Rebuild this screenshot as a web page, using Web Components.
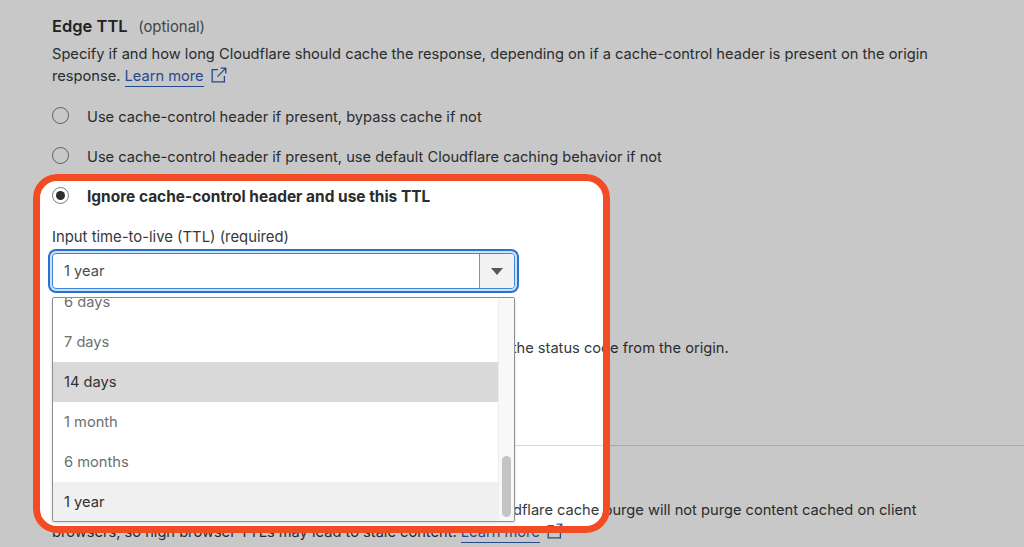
<!DOCTYPE html>
<html lang="en"><head><meta charset="utf-8"><title>Edge TTL</title>
<style>
html,body{margin:0;padding:0;background:#fff}
body{width:1024px;height:547px;overflow:hidden;position:relative;font:14.65px/22px Inter,"Liberation Sans",sans-serif;color:#36393a}
</style></head><body>
<cf-settings>
  <cf-section>
    <span slot="title">Edge TTL</span><span slot="note">(optional)</span>
    Specify if and how long Cloudflare should cache the response, depending on if a cache-control header is present on the origin response. <cf-link>Learn more</cf-link>
  </cf-section>
  <cf-radio>Use cache-control header if present, bypass cache if not</cf-radio>
  <cf-radio>Use cache-control header if present, use default Cloudflare caching behavior if not</cf-radio>
  <cf-radio checked>Ignore cache-control header and use this TTL</cf-radio>
  <cf-select label="Input time-to-live (TTL) (required)" value="1 year">
    <cf-option>6 days</cf-option>
    <cf-option>7 days</cf-option>
    <cf-option active>14 days</cf-option>
    <cf-option>1 month</cf-option>
    <cf-option>6 months</cf-option>
    <cf-option selected>1 year</cf-option>
  </cf-select>
  <cf-note>Cache is based on the status code from the origin.</cf-note>
  <cf-divider></cf-divider>
  <cf-foot>Specify how long client browsers should cache the response. Cloudflare cache purge will not purge content cached on client browsers, so high browser TTLs may lead to stale content. <cf-link>Learn more</cf-link></cf-foot>
</cf-settings>
<cf-highlight></cf-highlight>
<script>
const def=(name,html)=>customElements.define(name,class extends HTMLElement{
  constructor(){super();this.attachShadow({mode:'open'}).innerHTML=typeof html==='function'?html(this):html;}
});
def('cf-settings',`<style>:host{display:block;padding:16px 0 0 52px}
.c{display:flex;flex-direction:column}</style><div class="c"><slot></slot></div>`);
def('cf-section',`<style>:host{display:block;width:910px;margin-bottom:10px}
h3{margin:0 0 6px;font:600 16.5px/20px Inter,"Liberation Sans",sans-serif;color:#2a2c2d;display:flex;gap:10.5px;align-items:baseline}
.n{font-weight:400;font-size:14.9px;color:#55585a}</style>
<h3><slot name="title"></slot><span class="n"><slot name="note"></slot></span></h3><slot></slot>`);
def('cf-link',`<style>:host{display:inline-flex;align-items:center;gap:7px;color:#2f5fb3}
.t{border-bottom:1px solid #2f5fb3;line-height:20px}
svg{width:16px;height:16px;margin-top:-4px;display:block}</style>
<span class="t"><slot></slot></span><svg viewBox="0 0 16 16" fill="none" stroke="#2f5fb3" stroke-width="1.3"><path d="M7 2.6H1.2v12.2h12.2V9"/><path d="M6.4 9.6 14.6 1.4M9.6 1.2h5.2v5.2"/></svg>`);
def('cf-radio',`<style>:host{display:flex;align-items:center;height:40px;gap:18px}
.r{width:17px;height:17px;box-sizing:border-box;border:1.5px solid #77797b;border-radius:50%;background:#fff;display:flex;align-items:center;justify-content:center;margin-top:-3px;flex:none}
.d{width:9px;height:9px;border-radius:50%;background:#2b2d2e;display:none}
:host([checked]) .d{display:block}
:host([checked]){font-weight:700;font-size:15.45px;color:#2a2c2d}</style>
<span class="r"><span class="d"></span></span><span><slot></slot></span>`);
def('cf-select',el=>`<style>:host{display:block;width:463px;position:relative;margin-top:9px}
label{display:block;line-height:22px;margin-bottom:5px;font-size:14.85px}
.box{height:36px;box-sizing:border-box;display:flex;border:1px solid #3f86dc;border-radius:4px;background:#fff;box-shadow:0 0 0 2px #cbe3f9,0 0 0 4px #2a70d2;overflow:hidden}
.v{flex:1;padding:0 11px;line-height:34px;color:#4a4d4f}
.a{width:34px;border-left:1px solid #8d8f91;background:#f2f2f2;display:flex;align-items:center;justify-content:center}
.a svg{width:12px;height:7px;display:block}
.list{position:absolute;left:0;right:0;top:71px;height:225px;box-sizing:border-box;border:1px solid #8d8f91;border-radius:2px;background:#fff;overflow:hidden;display:flex;z-index:2;box-shadow:0 1px 3px rgba(0,0,0,.15)}
.items{flex:1;margin-top:-16px;display:flex;flex-direction:column}
.bar{width:16px;flex:none;background:#f8f8f8;border-left:1px solid #eee;box-sizing:border-box;position:relative}
.thumb{position:absolute;left:3px;width:9px;top:158px;height:61px;border-radius:5px;background:#c4c4c4}
</style>
<label>${el.getAttribute('label')}</label>
<div class="box"><span class="v">${el.getAttribute('value')}</span><span class="a"><svg viewBox="0 0 12 7"><path d="M0 0h12L6 7z" fill="#55585a"/></svg></span></div>
<div class="list"><div class="items"><slot></slot></div><div class="bar"><div class="thumb"></div></div></div>`);
def('cf-option',`<style>:host{display:flex;align-items:center;height:40px;flex:none;padding:0 11px;color:#6c6f71}
:host([active]){background:#d9d9d9;color:#2f3132}
:host([selected]){background:#f0f0f0;color:#2f3132}</style><slot></slot>`);
def('cf-note',`<style>:host{display:block;margin-top:48px;padding-left:327.5px;line-height:22px;white-space:nowrap}</style><slot></slot>`);
def('cf-divider',`<style>:host{display:block;height:1px;background:#d9d9d9;margin:86px 0 0 0}</style>`);
def('cf-foot',`<style>:host{display:block;margin-top:53px;width:880px}</style><slot></slot>`);
def('cf-highlight',`<style>:host{position:absolute;left:33px;top:174px;width:577px;height:359px;box-sizing:border-box;border:7px solid #f24c25;border-radius:24px;box-shadow:0 0 0 2000px rgba(0,0,0,.216);z-index:5;pointer-events:none}</style>`);
</script>
</body></html>
